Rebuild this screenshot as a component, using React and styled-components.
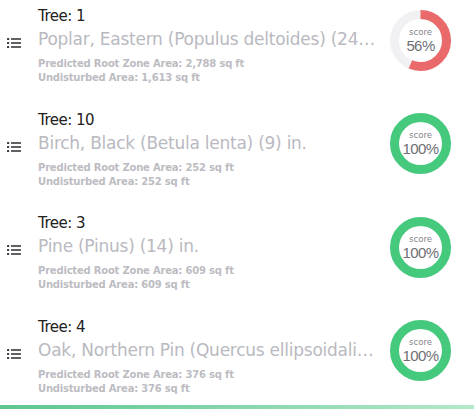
import React from "react";
import styled, { createGlobalStyle } from "styled-components";

const GlobalStyle = createGlobalStyle`
  html, body {
    margin: 0;
    padding: 0;
    background: #ffffff;
  }
  body {
    font-family: "DejaVu Sans", "Liberation Sans", sans-serif;
  }
`

const Page = styled.div`
  display: flex;
  flex-direction: column;
  height: 100vh;
  overflow: hidden;
`

const List = styled.div`
  flex: 1;
  overflow: hidden;
`

const Row = styled.div`
  display: flex;
  align-items: flex-start;
  height: 103.5px;
  box-sizing: border-box;
  padding: 6px 23px 0 7px;
`

const IconBox = styled.div`
  width: 14px;
  height: 10px;
  margin-top: 32px;
  margin-right: 17px;
  flex-shrink: 0;
  display: flex;
`

const Info = styled.div`
  flex: 1;
  min-width: 0;
`

const Title = styled.div`
  font-size: 15px;
  line-height: 20px;
  letter-spacing: -0.5px;
  color: #222222;
`

const Species = styled.div`
  margin-top: 1px;
  font-size: 17px;
  line-height: 24px;
  letter-spacing: -0.25px;
  color: #b9b9bf;
  white-space: nowrap;
  overflow: hidden;
  text-overflow: ellipsis;
`

const Details = styled.div`
  margin-top: 6px;
`

const Detail = styled.div`
  font-size: 10px;
  line-height: 14px;
  font-weight: bold;
  letter-spacing: -0.2px;
  color: #bcbcc2;
`

const Score = styled.div`
  position: relative;
  width: 61px;
  height: 61px;
  margin-top: 3.5px;
  margin-left: 11px;
  flex-shrink: 0;
`

const Ring = styled.svg`
  display: block;
`

const ScoreText = styled.div`
  position: absolute;
  inset: 0;
  display: flex;
  flex-direction: column;
  align-items: center;
  justify-content: center;
  gap: 1px;
  color: #6f6f76;
`

const ScoreLabel = styled.span`
  font-size: 8.5px;
  line-height: 9px;
  color: #85858c;
`

const ScoreValue = styled.span`
  font-family: "Liberation Sans", sans-serif;
  font-size: 15px;
  line-height: 15px;
  letter-spacing: -0.6px;
`

const BottomBar = styled.div`
  height: 4px;
  flex-shrink: 0;
  background: linear-gradient(90deg, #5ec690 0%, #86d6ab 50%, #b4e8cb 100%);
`

const trees = [
  { id: 1, species: "Poplar, Eastern (Populus deltoides) (24) in.", root: "2,788", undisturbed: "1,613", score: 56 },
  { id: 10, species: "Birch, Black (Betula lenta) (9) in.", root: "252", undisturbed: "252", score: 100 },
  { id: 3, species: "Pine (Pinus) (14) in.", root: "609", undisturbed: "609", score: 100 },
  { id: 4, species: "Oak, Northern Pin (Quercus ellipsoidalis) (11) in.", root: "376", undisturbed: "376", score: 100 },
];

function ListIcon() {
  return (
    <svg width="14" height="10" viewBox="0 0 14 10" fill="#3a3a40">
      <rect x="0" y="0" width="2.2" height="2" rx="0.6" />
      <rect x="0" y="4" width="2.2" height="2" rx="0.6" />
      <rect x="0" y="8" width="2.2" height="2" rx="0.6" />
      <rect x="4" y="0.2" width="10" height="1.6" />
      <rect x="4" y="4.2" width="10" height="1.6" />
      <rect x="4" y="8.2" width="10" height="1.6" />
    </svg>
  );
}

function ScoreRing({ value }) {
  const r = 26;
  const c = 2 * Math.PI * r;
  const full = value >= 100;
  const color = full ? "#45c97d" : "#ea6a6c";
  return (
    <Score>
      <Ring width="61" height="61" viewBox="0 0 61 61">
        <circle cx="30.5" cy="30.5" r={r} fill="none" stroke="#f1f1f3" strokeWidth="9" />
        <circle
          cx="30.5"
          cy="30.5"
          r={r}
          fill="none"
          stroke={color}
          strokeWidth="9"
          strokeDasharray={`${(c * value) / 100} ${c}`}
          transform="rotate(-90 30.5 30.5)"
        />
      </Ring>
      <ScoreText>
        <ScoreLabel>score</ScoreLabel>
        <ScoreValue>{value}%</ScoreValue>
      </ScoreText>
    </Score>
  );
}

export default function App() {
  return (
    <Page>
      <GlobalStyle />
      <List>
        {trees.map((t) => (
          <Row key={t.id}>
            <IconBox>
              <ListIcon />
            </IconBox>
            <Info>
              <Title>Tree: {t.id}</Title>
              <Species>{t.species}</Species>
              <Details>
                <Detail>Predicted Root Zone Area: {t.root} sq ft</Detail>
                <Detail>Undisturbed Area: {t.undisturbed} sq ft</Detail>
              </Details>
            </Info>
            <ScoreRing value={t.score} />
          </Row>
        ))}
      </List>
      <BottomBar />
    </Page>
  );
}
